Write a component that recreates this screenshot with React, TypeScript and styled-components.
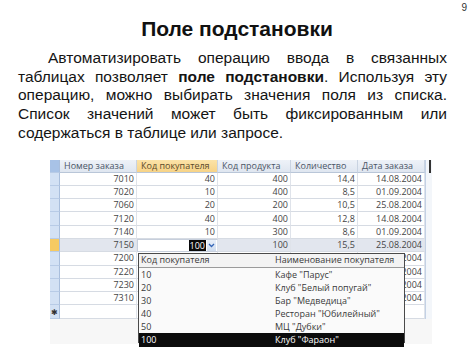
import * as React from 'react';
import styled, { createGlobalStyle, css } from 'styled-components';

const GlobalStyle = createGlobalStyle`
  html, body {
    margin: 0;
    padding: 0;
    background: #ffffff;
  }
`;

const Page = styled.div`
  width: 474px;
  height: 355px;
  overflow: hidden;
  background: #ffffff;
  font-family: 'Liberation Sans', Arial, sans-serif;
  color: #111;
`;

const PageNum = styled.div`
  height: 17px;
  padding: 2px 7px 0 0;
  box-sizing: border-box;
  text-align: right;
  font-size: 10px;
  line-height: 12px;
  color: #333;
`;

const Title = styled.h1`
  margin: 0;
  font-size: 21px;
  line-height: 24px;
  font-weight: bold;
  text-align: center;
  color: #111;
`;

const Paragraph = styled.div`
  margin-top: 8px;
  padding: 0 27px 0 18px;
  font-size: 15.5px;
  line-height: 18.7px;
  color: #141414;
`;

const Line = styled.div<{ $indent?: boolean; $last?: boolean }>`
  text-align: ${(p) => (p.$last ? 'left' : 'justify')};
  text-align-last: ${(p) => (p.$last ? 'left' : 'justify')};
  text-indent: ${(p) => (p.$indent ? '30px' : '0')};
  white-space: ${(p) => (p.$last ? 'nowrap' : 'normal')};
`;

const Bold = styled.b`
  font-weight: bold;
`;

const TableWrap = styled.div`
  position: relative;
  margin: 17px 0 0 50px;
  width: 382px;
  height: 184px;
  background: #f7f7f7;
  font-family: 'Open Sans', 'Noto Sans', sans-serif;
  font-size: 9px;
  color: #454545;
`;

const COLS = '10px 77px 81px 73px 67px 67px 7px';

const Row = styled.div<{ $h?: number; $current?: boolean }>`
  display: grid;
  grid-template-columns: ${COLS};
  height: ${(p) => p.$h ?? 13.3}px;
  background: ${(p) => (p.$current ? '#e2e6ee' : '#ffffff')};
`;

const Cell = styled.div<{ $right?: boolean; $head?: boolean; $hot?: boolean }>`
  box-sizing: border-box;
  display: flex;
  align-items: center;
  justify-content: ${(p) => (p.$right ? 'flex-end' : 'flex-start')};
  padding: ${(p) => (p.$right ? '0 2px 0 0' : '0 0 0 4px')};
  border-right: 1px solid #dfe3ea;
  border-bottom: 1px solid #d6dbe3;
  white-space: nowrap;
  overflow: hidden;
  line-height: 12px;
  ${(p) =>
    p.$head &&
    css`
      background: linear-gradient(#eef2f8, #dfe6f0);
      color: #4a5566;
      border-right-color: #c9d3e1;
      border-bottom-color: #b9c6d8;
    `}
  ${(p) =>
    p.$hot &&
    css`
      background: linear-gradient(#fbe3a8, #f7d387);
      color: #5a4a2a;
    `}
`;

const Selector = styled.div<{ $corner?: boolean; $current?: boolean }>`
  box-sizing: border-box;
  border-bottom: 1px solid #b8cbe6;
  border-right: 1px solid #a9bedc;
  background: ${(p) => (p.$corner ? '#a8c2e6' : p.$current ? '#f6ca62' : '#d3e1f4')};
  display: flex;
  align-items: center;
  justify-content: center;
  font-size: 8px;
  color: #333;
`;

const Scroll = styled.div<{ $top?: boolean }>`
  border-left: 1px solid #c3d1e5;
  background: ${(p) =>
    p.$top ? 'linear-gradient(90deg, #f3f6fa 0 3px, #333 3px 5px, #f3f6fa 5px)' : '#f3f6fa'};
`;

const ComboCell = styled.div`
  box-sizing: border-box;
  display: flex;
  align-items: center;
  justify-content: flex-end;
  background: #ffffff;
  border: 1px solid #c7cfdc;
  border-right: 1px solid #dfe3ea;
`;

const Picked = styled.span`
  background: #0a0a0a;
  color: #ffffff;
  line-height: 11px;
  padding: 0 1px;
`;

const ArrowBtn = styled.span`
  width: 9px;
  height: 11px;
  margin: 0 1px;
  background: linear-gradient(#e8eff9, #cfdcee);
  display: flex;
  align-items: center;
  justify-content: center;
`;

const Dropdown = styled.div`
  position: absolute;
  left: 88px;
  top: 93px;
  width: 267px;
  height: 90px;
  box-sizing: border-box;
  background: #fafafa;
  border: 1px solid #4a4a4a;
  font-size: 9px;
  color: #3a3a3a;
`;

const DropRow = styled.div<{ $head?: boolean; $sel?: boolean }>`
  display: grid;
  grid-template-columns: 134px 1fr;
  height: ${(p) => (p.$head ? 13.5 : 13.1)}px;
  align-items: center;
  line-height: 12px;
  ${(p) =>
    p.$head &&
    css`
      border-bottom: 1px solid #9a9a9a;
      background: #f3f3f3;
    `}
  ${(p) =>
    p.$sel &&
    css`
      background: #0c0c0c;
      color: #ffffff;
    `}
  & > span {
    padding-left: 2px;
    white-space: nowrap;
  }
`;

type Order = {
  num: string;
  buyer: string;
  product: string;
  qty: string;
  date: string;
  hidden?: boolean;
};

// rows 7200+ sit under the open lookup list, only the order number and the year peek out
const orders: Order[] = [
  { num: '7010', buyer: '40', product: '400', qty: '14,4', date: '14.08.2004' },
  { num: '7020', buyer: '10', product: '400', qty: '8,5', date: '01.09.2004' },
  { num: '7060', buyer: '20', product: '200', qty: '10,5', date: '25.08.2004' },
  { num: '7120', buyer: '40', product: '400', qty: '12,8', date: '14.08.2004' },
  { num: '7140', buyer: '10', product: '300', qty: '8,6', date: '01.09.2004' },
  { num: '7150', buyer: '100', product: '100', qty: '15,5', date: '25.08.2004' },
  { num: '7200', buyer: '', product: '', qty: '', date: '2004', hidden: true },
  { num: '7220', buyer: '', product: '', qty: '', date: '2004', hidden: true },
  { num: '7230', buyer: '', product: '', qty: '', date: '2004', hidden: true },
  { num: '7310', buyer: '', product: '', qty: '', date: '2004', hidden: true },
];

const buyers = [
  ['10', 'Кафе "Парус"'],
  ['20', 'Клуб "Белый попугай"'],
  ['30', 'Бар "Медведица"'],
  ['40', 'Ресторан "Юбилейный"'],
  ['50', 'МЦ "Дубки"'],
  ['100', 'Клуб "Фараон"'],
];

const Chevron = () => (
  <svg width="7" height="5" viewBox="0 0 7 5">
    <path d="M1 1 L3.5 3.5 L6 1" fill="none" stroke="#3566b8" strokeWidth="1.3" />
  </svg>
);

export default function App() {
  return (
    <Page>
      <GlobalStyle />
      <PageNum>9</PageNum>
      <Title>Поле подстановки</Title>
      <Paragraph>
        <Line $indent>Автоматизировать операцию ввода в связанных</Line>
        <Line>
          таблицах позволяет <Bold>поле подстановки</Bold>. Используя эту
        </Line>
        <Line>операцию, можно выбирать значения поля из списка.</Line>
        <Line>Список значений может быть фиксированным или</Line>
        <Line $last>содержаться в таблице или запросе.</Line>
      </Paragraph>

      <TableWrap>
        <Row $h={13}>
          <Selector $corner />
          <Cell $head>Номер заказа</Cell>
          <Cell $head $hot>Код покупателя</Cell>
          <Cell $head>Код продукта</Cell>
          <Cell $head>Количество</Cell>
          <Cell $head>Дата заказа</Cell>
          <Scroll $top />
        </Row>
        {orders.map((o) => {
          const current = o.num === '7150';
          return (
            <Row key={o.num} $current={current}>
              <Selector $current={current} />
              <Cell $right>{o.num}</Cell>
              {current ? (
                <ComboCell>
                  <Picked>{o.buyer}</Picked>
                  <ArrowBtn>
                    <Chevron />
                  </ArrowBtn>
                </ComboCell>
              ) : (
                <Cell $right>{o.buyer}</Cell>
              )}
              <Cell $right>{o.product}</Cell>
              <Cell $right>{o.qty}</Cell>
              <Cell $right>{o.date}</Cell>
              <Scroll />
            </Row>
          );
        })}
        <Row>
          <Selector>✱</Selector>
          <Cell />
          <Cell />
          <Cell />
          <Cell />
          <Cell />
          <Scroll />
        </Row>

        <Dropdown>
          <DropRow $head>
            <span>Код покупателя</span>
            <span>Наименование покупателя</span>
          </DropRow>
          {buyers.map(([code, name]) => (
            <DropRow key={code} $sel={code === '100'}>
              <span>{code}</span>
              <span>{name}</span>
            </DropRow>
          ))}
        </Dropdown>
      </TableWrap>
    </Page>
  );
}
